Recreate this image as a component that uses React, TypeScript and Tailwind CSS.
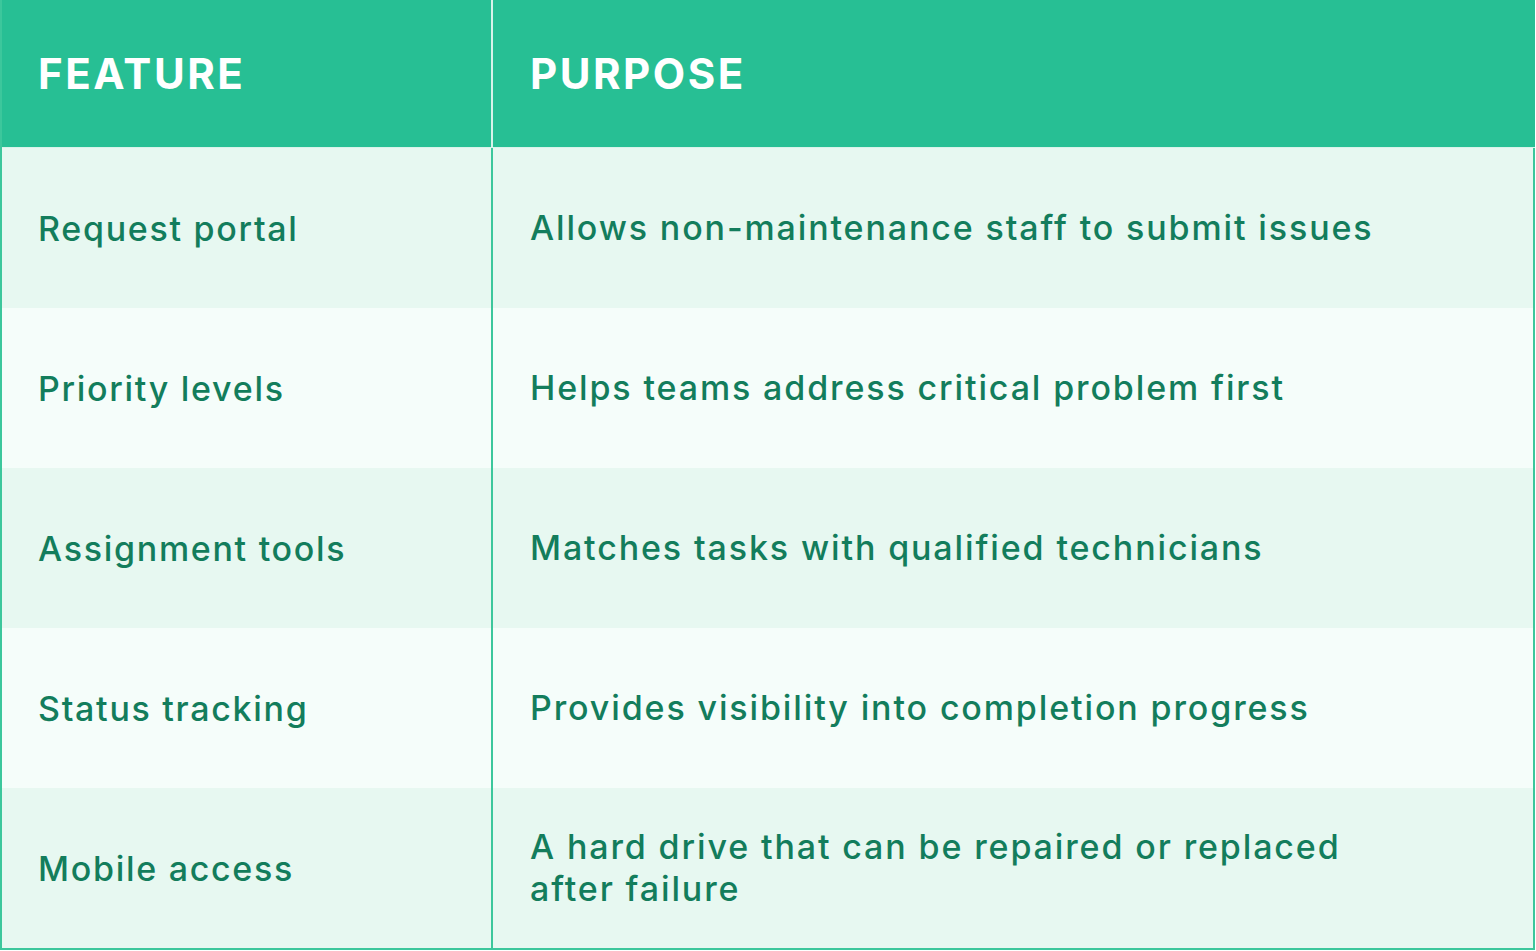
const rows = [
  ["Request portal", "Allows non-maintenance staff to submit issues"],
  ["Priority levels", "Helps teams address critical problem first"],
  ["Assignment tools", "Matches tasks with qualified technicians"],
  ["Status tracking", "Provides visibility into completion progress"],
  ["Mobile access", "A hard drive that can be repaired or replaced after failure"],
];

export default function App() {
  return (
    <div className="w-[1536px] h-[951px] bg-white font-['Inter',sans-serif]">
      <div className="w-[1535px] border-l-2 border-[#3cc79c]">
        {/* header */}
        <div className="grid grid-cols-[491px_1042px] h-[148px] bg-[#27bf94] border-b border-[#d8f3ea]">
          <div className="flex items-center pl-9 border-r-2 border-[#d8f3ea]">
            <span className="text-[42px] font-bold text-white tracking-[0.06em]">FEATURE</span>
          </div>
          <div className="flex items-center pl-[37px]">
            <span className="text-[42px] font-bold text-white tracking-[0.06em]">PURPOSE</span>
          </div>
        </div>
        {/* body */}
        <div className="border-b-2 border-[#3cc79c]">
          {rows.map(([feature, purpose], i) => (
            <div
              key={feature}
              className={
                "grid grid-cols-[491px_1042px] h-[160px] text-[#137d5c] " +
                (i % 2 === 0 ? "bg-[#e7f8f1]" : "bg-[#f5fdfa]")
              }
            >
              <div className="flex items-center pl-9 border-r-2 border-[#3cc79c]">
                <span className="text-[34px] font-medium tracking-[0.05em]">{feature}</span>
              </div>
              <div className="flex items-center pl-[37px] border-r-2 border-[#3cc79c]">
                <span className="text-[34px] font-medium tracking-[0.055em] leading-[42px] max-w-[880px]">
                  {purpose}
                </span>
              </div>
            </div>
          ))}
        </div>
      </div>
    </div>
  );
}
